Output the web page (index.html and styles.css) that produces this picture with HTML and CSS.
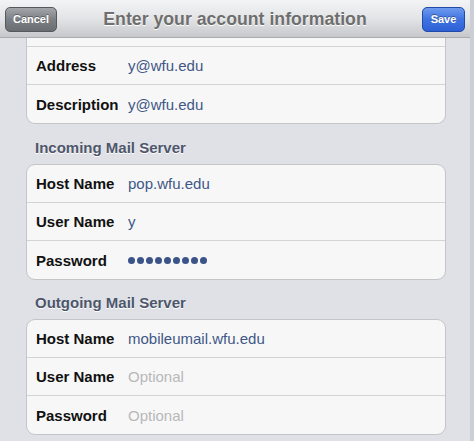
FILE: index.html
```html
<!DOCTYPE html>
<html>
<head>
<meta charset="utf-8">
<link rel="stylesheet" href="styles.css">
</head>
<body>
<div class="screen">
  <div class="sheet">
    <header class="navbar">
      <button class="btn btn-cancel">Cancel</button>
      <h1 class="title">Enter your account information</h1>
      <button class="btn btn-save">Save</button>
    </header>
    <div class="content">
      <div class="card card-cut">
        <div class="row row-partial"></div>
        <div class="row"><span class="label">Address</span><span class="value">y@wfu.edu</span></div>
        <div class="row"><span class="label">Description</span><span class="value">y@wfu.edu</span></div>
      </div>
      <div class="section-title">Incoming Mail Server</div>
      <div class="card">
        <div class="row"><span class="label">Host Name</span><span class="value">pop.wfu.edu</span></div>
        <div class="row"><span class="label">User Name</span><span class="value">y</span></div>
        <div class="row"><span class="label">Password</span><span class="dots"><i></i><i></i><i></i><i></i><i></i><i></i><i></i><i></i><i></i></span></div>
      </div>
      <div class="section-title section-title-tight">Outgoing Mail Server</div>
      <div class="card">
        <div class="row"><span class="label">Host Name</span><span class="value">mobileumail.wfu.edu</span></div>
        <div class="row"><span class="label">User Name</span><span class="placeholder">Optional</span></div>
        <div class="row"><span class="label">Password</span><span class="placeholder">Optional</span></div>
      </div>
    </div>
  </div>
  <div class="edge"></div>
</div>
</body>
</html>
```
FILE: styles.css
```css
* { box-sizing: border-box; }
html, body { margin: 0; padding: 0; }
body {
  font-family: "Liberation Sans", Arial, sans-serif;
  background: #dfe1e6;
  width: 474px;
  height: 441px;
  overflow: hidden;
}
.screen {
  display: flex;
  height: 441px;
}
.sheet {
  width: 470px;
  background: #dfe1e6;
  display: flex;
  flex-direction: column;
}
.edge {
  width: 4px;
  background: #cbced3;
}
.navbar {
  height: 38px;
  flex: none;
  display: grid;
  grid-template-columns: 1fr auto 1fr;
  align-items: center;
  padding: 1px 5px 0 5px;
  background: linear-gradient(#f3f4f5, #e3e4e6 50%, #c6c8cb);
  border-bottom: 1px solid #a9abae;
}
.title {
  margin: 0;
  font-size: 17.7px;
  font-weight: bold;
  color: #6e6e6e;
  text-shadow: 0 1px 0 #ffffff;
}
.btn {
  font-family: "Liberation Sans", Arial, sans-serif;
  height: 25px;
  border-radius: 5px;
  color: #ffffff;
  font-weight: bold;
  font-size: 11px;
  padding: 0;
  text-shadow: 0 -1px 0 rgba(0,0,0,0.35);
}
.btn-cancel {
  justify-self: start;
  width: 52px;
  background: linear-gradient(#a3a6ab, #7c7f84 50%, #6a6d72);
  border: 1px solid #55585c;
}
.btn-save {
  justify-self: end;
  width: 43px;
  background: linear-gradient(#6e9bee, #3f72e0 50%, #2d60d6);
  border: 1px solid #2149a6;
}
.content {
  padding: 0 24px 0 26px;
}
.card {
  background: #f7f7f7;
  border: 1px solid #c3c5c8;
  border-radius: 9px;
}
.card-cut {
  border-top: none;
  border-top-left-radius: 0;
  border-top-right-radius: 0;
}
.row {
  height: 38px;
  display: grid;
  grid-template-columns: 92px 1fr;
  align-items: center;
  padding-left: 9px;
  border-bottom: 1px solid #d3d4d6;
  font-size: 15px;
}
.row:last-child {
  height: 38px;
  border-bottom: none;
}
.row-partial {
  height: 9px;
}
.label {
  font-weight: bold;
  color: #111111;
}
.value {
  color: #3f5787;
}
.placeholder {
  color: #b7b8bb;
}
.dots {
  display: flex;
  gap: 2px;
}
.dots i {
  width: 7px;
  height: 7px;
  border-radius: 50%;
  background: #3a5388;
}
.section-title {
  padding: 15px 0 7px 9px;
  font-size: 15px;
  line-height: 18px;
  font-weight: bold;
  color: #4d566b;
  text-shadow: 0 1px 0 #ffffff;
}
.section-title-tight {
  padding-top: 14px;
}
```
